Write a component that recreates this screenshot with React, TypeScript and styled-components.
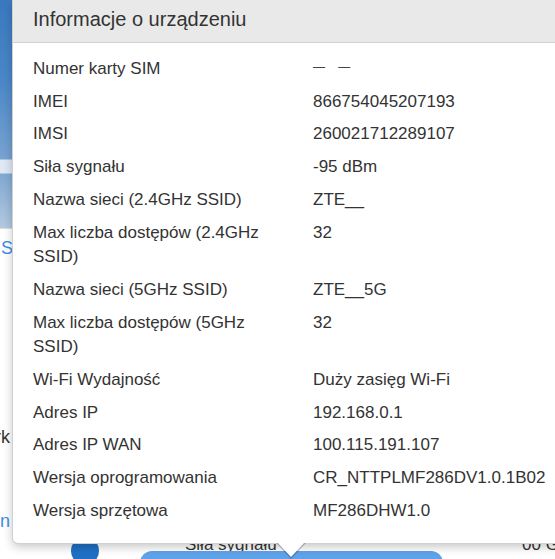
import styled, { createGlobalStyle } from "styled-components";

const GlobalStyle = createGlobalStyle`
  html, body {
    margin: 0;
    padding: 0;
    background: #fff;
  }
  body {
    font-family: "Liberation Sans", Arial, Helvetica, sans-serif;
    color: #333;
  }
`;

type Info = { label: string; value: string; dashes?: boolean };

const rows: Info[] = [
  { label: "Numer karty SIM", value: "", dashes: true },
  { label: "IMEI", value: "866754045207193" },
  { label: "IMSI", value: "260021712289107" },
  { label: "Siła sygnału", value: "-95 dBm" },
  { label: "Nazwa sieci (2.4GHz SSID)", value: "ZTE__" },
  { label: "Max liczba dostępów (2.4GHz SSID)", value: "32" },
  { label: "Nazwa sieci (5GHz SSID)", value: "ZTE__5G" },
  { label: "Max liczba dostępów (5GHz SSID)", value: "32" },
  { label: "Wi-Fi Wydajność", value: "Duży zasięg Wi-Fi" },
  { label: "Adres IP", value: "192.168.0.1" },
  { label: "Adres IP WAN", value: "100.115.191.107" },
  { label: "Wersja oprogramowania", value: "CR_NTTPLMF286DV1.0.1B02" },
  { label: "Wersja sprzętowa", value: "MF286DHW1.0" },
];

const App = () => {
  return (
    <>
      <GlobalStyle />
      <Screen>
        <BgPage>
          <Hero>
            <svg width="100%" height="100%" viewBox="0 0 60 228" preserveAspectRatio="xMinYMin slice">
              <line x1="0" y1="18" x2="60" y2="18" stroke="#fff" strokeOpacity="0.75" strokeWidth="1.5" strokeDasharray="4 3" />
              <line x1="0" y1="98" x2="30" y2="150" stroke="#fff" strokeOpacity="0.75" strokeWidth="1.5" strokeDasharray="4 3" />
            </svg>
          </Hero>
          <SideList>
            <SideItem $blue $shift={1} $top={7}>Sieć</SideItem>
            <SideItem $shift={-56} $top={165}>Network</SideItem>
            <SideItem $blue $shift={-48} $top={60}>Telefon</SideItem>
          </SideList>
          <BottomRow>
            <Dot />
            <SignalLabel>Siła sygnału</SignalLabel>
            <Pill />
            <Speed>00 G</Speed>
          </BottomRow>
        </BgPage>

        <Popover>
          <PopHeader>Informacje o urządzeniu</PopHeader>
          <PopBody>
            {rows.map((r) => (
              <Row key={r.label}>
                <Label>{r.label}</Label>
                <Value>{r.dashes ? <Dashes>— —</Dashes> : r.value}</Value>
              </Row>
            ))}
          </PopBody>
        </Popover>
      </Screen>
    </>
  );
};

export default App;

const Screen = styled.div`
  position: relative;
  width: 555px;
  height: 559px;
  overflow: hidden;
  background: #fff;
`;

const BgPage = styled.div`
  display: flex;
  flex-direction: column;
  width: 100%;
  height: 100%;
`;

const Hero = styled.div`
  height: 228px;
  flex-shrink: 0;
  background: linear-gradient(180deg, #3a79bf 0%, #4a87c8 35%, #7ea7d2 75%, #b3c9df 100%);
  border-bottom: 1px solid #dcdcdc;
  svg {
    display: block;
  }
`;

const SideList = styled.div`
  display: flex;
  flex-direction: column;
  flex: 1;
`;

const SideItem = styled.div<{ $blue?: boolean; $shift: number; $top: number }>`
  margin-left: ${(p) => p.$shift}px;
  margin-top: ${(p) => p.$top}px;
  font-size: 18px;
  line-height: 24px;
  white-space: nowrap;
  color: ${(p) => (p.$blue ? "#3a8ee6" : "#333")};
`;

const BottomRow = styled.div`
  display: flex;
  align-items: flex-start;
  height: 26px;
  flex-shrink: 0;
`;

const Dot = styled.div`
  width: 28px;
  height: 28px;
  margin: 4px 0 0 71px;
  border-radius: 50%;
  background: #1f70c4;
`;

const SignalLabel = styled.div`
  margin: 2px 0 0 86px;
  font-size: 17px;
  line-height: 20px;
  color: #333;
  white-space: nowrap;
`;

const Pill = styled.div`
  position: absolute;
  left: 140px;
  bottom: -20px;
  width: 303px;
  height: 28px;
  border-radius: 12px;
  background: #5fa2ea;
`;

const Speed = styled.div`
  margin: 2px 0 0 auto;
  width: 33px;
  overflow: hidden;
  font-size: 17px;
  line-height: 20px;
  white-space: nowrap;
  color: #333;
`;

const Popover = styled.div`
  position: absolute;
  left: 12px;
  top: 0;
  width: 556px;
  background: #fff;
  border: 1px solid rgba(0, 0, 0, 0.18);
  border-top: none;
  border-radius: 0 0 6px 6px;
  box-shadow: 0 3px 10px rgba(0, 0, 0, 0.22);

  &::before,
  &::after {
    content: "";
    position: absolute;
    left: 50%;
    border-style: solid;
    border-color: transparent;
  }
  &::before {
    bottom: -16px;
    margin-left: -15px;
    border-width: 16px 15px 0 15px;
    border-top-color: rgba(0, 0, 0, 0.22);
  }
  &::after {
    bottom: -14px;
    margin-left: -14px;
    border-width: 15px 14px 0 14px;
    border-top-color: #fff;
  }
`;

const PopHeader = styled.div`
  height: 38px;
  padding: 0 20px 4px;
  line-height: 38px;
  background: #e9e9e9;
  border-bottom: 1px solid #d2d2d2;
  font-size: 20px;
  color: #333;
`;

const PopBody = styled.div`
  padding: 10px 20px 15px;
`;

const Row = styled.div`
  display: grid;
  grid-template-columns: 280px 1fr;
  padding: 4px 0;
  font-size: 17px;
  line-height: 24.7px;
  color: #333;
`;

const Label = styled.div`
  padding-right: 35px;
`;

const Value = styled.div`
  white-space: nowrap;
`;

const Dashes = styled.span`
  position: relative;
  top: -3px;
  font-size: 12px;
  line-height: 1;
  letter-spacing: 5px;
  color: #444;
`;
